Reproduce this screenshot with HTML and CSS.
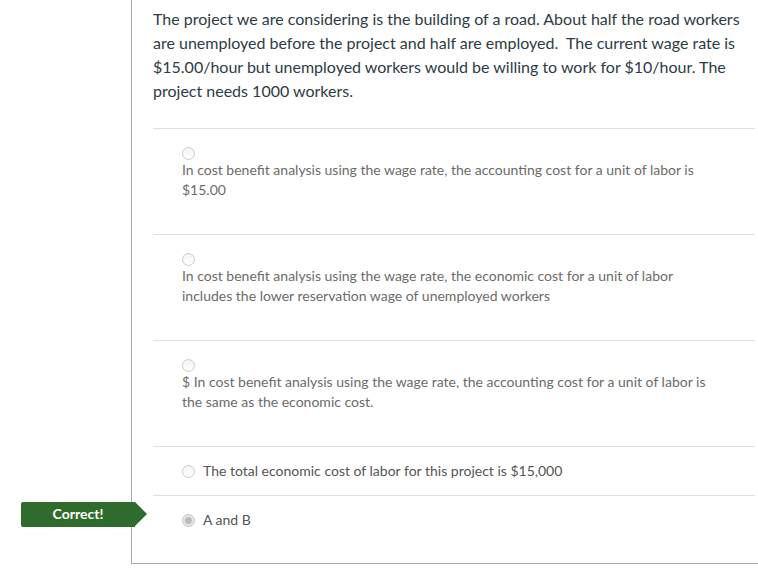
FILE: index.html
```html
<!DOCTYPE html>
<html lang="en">
<head>
    <meta charset="UTF-8">
    <title>Quiz question</title>
    <link rel="stylesheet" href="styles.css">
</head>
<body>
    <div class="question">
        <div class="question-text">
            The project we are considering is the building of a road. About half the road workers are unemployed before the project and half are employed.&nbsp; The current wage rate is $15.00/hour but unemployed workers would be willing to work for $10/hour. The project needs 1000 workers.
        </div>

        <div class="answers">
            <div class="answer stacked">
                <span class="radio"></span>
                <div class="answer-label">In cost benefit analysis using the wage rate, the accounting cost for a unit of labor is $15.00</div>
            </div>
            <div class="answer stacked">
                <span class="radio"></span>
                <div class="answer-label">In cost benefit analysis using the wage rate, the economic cost for a unit of labor includes the lower reservation wage of unemployed workers</div>
            </div>
            <div class="answer stacked">
                <span class="radio"></span>
                <div class="answer-label">$ In cost benefit analysis using the wage rate, the accounting cost for a unit of labor is the same as the economic cost.</div>
            </div>
            <div class="answer inline">
                <span class="radio"></span>
                <div class="answer-label">The total economic cost of labor for this project is $15,000</div>
            </div>
            <div class="answer inline last">
                <div class="badge">Correct!</div>
                <span class="radio checked"></span>
                <div class="answer-label">A and B</div>
            </div>
        </div>
    </div>
</body>
</html>
```

FILE: styles.css
```css
body {
    margin: 0;
    font-family: Lato, "Open Sans", "Liberation Sans", sans-serif;
    background-color: #fff;
}
.question {
    margin-left: 131px;
    height: 563px;
    border-left: 1px solid #aaa;
    border-bottom: 1px solid #aaa;
}
.question-text {
    padding: 7px 16px 0 21px;
    font-size: 16px;
    line-height: 24px;
    color: #2d3b45;
    margin-bottom: 25px;
}
.answers {
    margin-left: 21px;
    margin-right: 3px;
}
.answer {
    position: relative;
    border-top: 1px solid #e0e0e0;
    font-size: 14px;
    line-height: 20px;
    color: #6b6b6b;
    padding-left: 29px;
    padding-right: 40px;
}
.answer.stacked {
    padding-top: 18px;
    padding-bottom: 34px;
}
.answer.inline {
    display: flex;
    align-items: center;
    gap: 8px;
    padding-top: 14px;
    padding-bottom: 14px;
}
.answer.last {
    padding-bottom: 34px;
}
.radio {
    display: block;
    width: 11px;
    height: 11px;
    border: 1px solid #ccc;
    border-radius: 50%;
    background: linear-gradient(#f4f4f4, #fff);
}
.radio.checked {
    background: radial-gradient(circle, #bbb 0 3px, #e6e6e6 4px);
    border-color: #c4c4c4;
}
.answer.inline .radio {
    margin-top: 1px;
}
.answer.inline .answer-label {
    color: #555;
}
.badge {
    position: absolute;
    left: -132px;
    top: 6px;
    width: 114px;
    height: 25px;
    line-height: 24px;
    background-color: #2f6b2c;
    color: #fff;
    font-size: 14px;
    font-weight: bold;
    text-align: center;
    border-radius: 2px 0 0 2px;
}
.badge::after {
    content: "";
    position: absolute;
    right: -12px;
    top: 0;
    border-top: 12.5px solid transparent;
    border-bottom: 12.5px solid transparent;
    border-left: 12px solid #2f6b2c;
}
```
